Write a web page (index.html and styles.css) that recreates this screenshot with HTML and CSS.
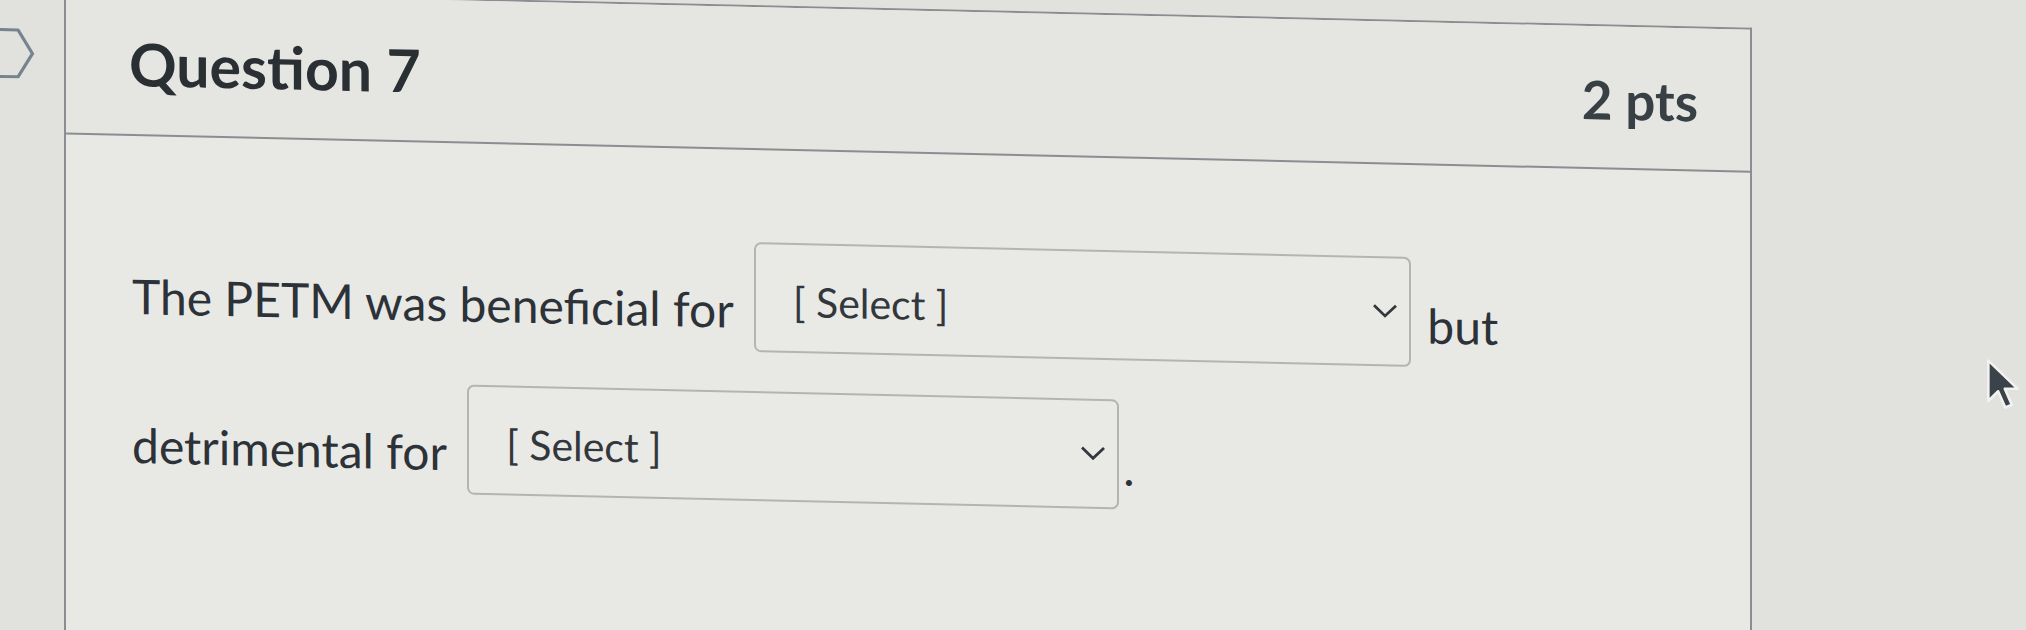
FILE: index.html
```html
<!DOCTYPE html>
<html lang="en">
<head>
<meta charset="utf-8">
<title>Question 7</title>
<link rel="stylesheet" href="styles.css">
</head>
<body>
<div class="stage">
  <div class="gutter">
    <svg class="nav-tab" width="36" height="50" viewBox="0 0 36 50" aria-hidden="true">
      <path d="M-4 1.5 H18 L32.5 25 L18 48.5 H-4" fill="none" stroke="#77838e" stroke-width="3.2" stroke-linejoin="round"/>
    </svg>
  </div>
  <div class="card">
    <div class="card-header">
      <h2 class="q-title">Question 7</h2>
      <span class="q-points">2 pts</span>
    </div>
    <div class="card-body">
      <p class="q-text">The PETM was beneficial for <span class="select select-wide"><span class="select-label">[ Select ]</span><svg class="chev" width="26" height="15" viewBox="0 0 26 15"><path d="M2 2 L13 12.5 L24 2" fill="none" stroke="#33383d" stroke-width="2.8"/></svg></span> but detrimental for <span class="select select-narrow"><span class="select-label">[ Select ]</span><svg class="chev" width="26" height="15" viewBox="0 0 26 15"><path d="M2 2 L13 12.5 L24 2" fill="none" stroke="#33383d" stroke-width="2.8"/></svg></span>.</p>
    </div>
  </div>
</div>
<svg class="cursor" width="40" height="60" viewBox="0 0 30 46" aria-hidden="true">
  <path d="M3 2 L3 33 L10.5 25.5 L16 38 L21 35.8 L15.6 23.6 L25.5 23.6 Z" fill="#3b434a" stroke="#f2f2f0" stroke-width="2" stroke-linejoin="round"/>
</svg>
</body>
</html>
```
FILE: styles.css
```css
html, body {
  margin: 0;
  padding: 0;
  width: 2026px;
  height: 630px;
  overflow: hidden;
  background: #e1e1de;
  font-family: Lato, "Open Sans", sans-serif;
  color: #2c3237;
}

.stage {
  display: flex;
  align-items: flex-start;
  margin-top: -12px;
  transform: skewY(1.3deg);
  transform-origin: 0 0;
}

.gutter {
  flex: none;
  width: 64px;
  padding-top: 40px;
}

.nav-tab {
  display: block;
}

.card {
  flex: none;
  width: 1684px;
  height: 720px;
  background: #e8e8e5;
  border: 2px solid #8a8e93;
  border-bottom: none;
}

.card-header {
  display: flex;
  justify-content: space-between;
  align-items: baseline;
  padding: 36px 52px 34px 63px;
  background: #e5e5e2;
  border-bottom: 2px solid #8a8e93;
}

.q-title {
  margin: 0;
  font-size: 59px;
  line-height: 1.2;
  font-weight: 700;
  color: #2a2f34;
}

.q-points {
  font-size: 53px;
  line-height: 1.2;
  font-weight: 700;
  color: #383f45;
}

.card-body {
  padding: 85px 66px 0 66px;
}

.q-text {
  margin: 0;
  font-size: 48px;
  line-height: 149px;
  color: #2c3237;
}

.select {
  display: inline-flex;
  align-items: center;
  box-sizing: border-box;
  height: 110px;
  padding: 0 11px 0 37px;
  margin: 0 4px 0 9px;
  vertical-align: 12px;
  border: 2px solid #b4b4b2;
  border-radius: 7px;
  background: #e9e9e6;
  line-height: normal;
}

.select-wide {
  width: 657px;
}

.select-narrow {
  width: 652px;
}

.select-label {
  padding-top: 7px;
  font-size: 41px;
  color: #32373c;
  white-space: pre;
}

.chev {
  display: block;
  margin-left: auto;
}

.cursor {
  position: absolute;
  left: 1984px;
  top: 358px;
}
```
